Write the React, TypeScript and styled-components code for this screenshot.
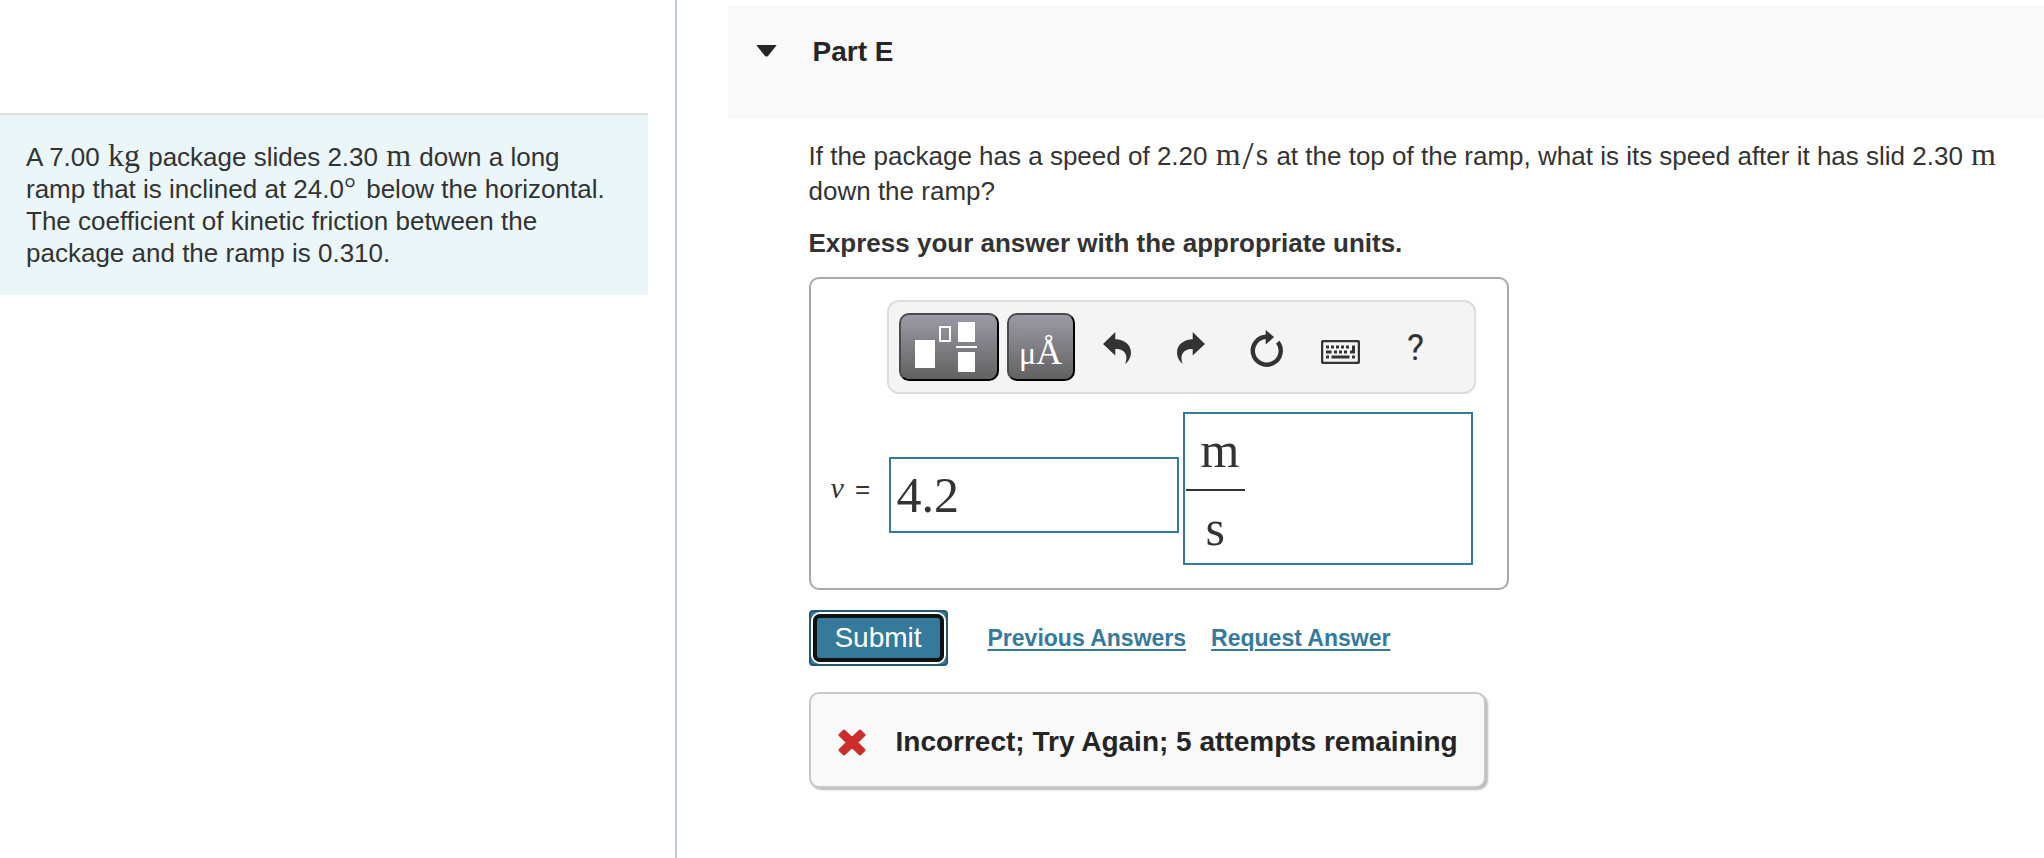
import React, { useState } from 'react';
import styled, { createGlobalStyle } from 'styled-components';

const sans = '"Liberation Sans", Arial, sans-serif';
const serif = '"Liberation Serif", "Times New Roman", serif';
const teal = '#367a9b';

const GlobalStyle = createGlobalStyle`
  *, *::before, *::after { box-sizing: border-box; }
  body { margin: 0; background: #fff; color: #333; font: 26px/32px ${sans}; }
  h2, p { margin: 0; }
  button, input { font: inherit; color: inherit; }
`;

const Page = styled.div`
  display: grid;
  grid-template-columns: 33% 2px 1fr;
  min-height: 100vh;
`;
const Side = styled.aside`
  padding: 113px 27px 0 0;
`;
const Divider = styled.div`
  background: #becbdc;
`;
const Problem = styled.p`
  padding: 26px 32px 26px 26px;
  border-top: 2px solid #ddd;
  background: #eaf6f8;
`;
const Main = styled.main`
  padding-top: 5px;
`;
const PartHeader = styled.header`
  display: flex;
  gap: 36px;
  height: 113px;
  margin-left: 51px;
  padding: 30px 28px;
  background: #f9f9f9;
  color: #252525;
`;
const Toggle = styled.button`
  display: flex;
  align-items: center;
  height: 32px;
  padding: 0;
  border: 0;
  background: none;
`;
const PartTitle = styled.h2`
  font-size: 28px;
  line-height: 34px;
`;
const Body = styled.div`
  display: flex;
  flex-direction: column;
  align-items: flex-start;
  padding: 21px 40px 40px 132px;
`;
const Question = styled.p`
  line-height: 35px;
`;
const Instruction = styled.p`
  margin-top: 18px;
  font-weight: bold;
`;
const Unit = styled.span`
  margin: 0 1px;
  font-family: ${serif};
  font-size: 32px;
  line-height: 1px;
`;
const Slash = styled.span`
  margin: 0 2px;
  font-size: 40px;
  vertical-align: -4px;
`;
const Degree = styled.span`
  margin-right: 3px;
  font-family: ${serif};
  font-size: 30px;
  line-height: 1px;
`;
const AnswerCard = styled.form`
  width: 700px;
  max-width: 100%;
  margin-top: 18px;
  padding: 21px 31px 23px 20px;
  border: 2px solid #a9a9a9;
  border-radius: 10px;
`;
const Toolbar = styled.div`
  display: flex;
  align-items: center;
  gap: 8px;
  height: 94px;
  margin: 0 0 18px 56px;
  padding: 0 10px;
  border: 2px solid #ddd;
  border-radius: 12px;
  background: #f4f4f4;
`;
const PaletteButton = styled.button<{ $width: number }>`
  display: flex;
  align-items: center;
  justify-content: center;
  width: ${p => p.$width}px;
  height: 68px;
  padding: 0;
  border: 2px solid;
  border-color: #4b4b4b #000 #000 #4b4b4b;
  border-radius: 10px;
  background: linear-gradient(#9c9aa5, #626262);
  color: #fff;
`;
const UnitSymbols = styled.span`
  padding-top: 10px;
  font-family: ${serif};
  font-size: 36px;
`;
const Mu = styled.span`
  font-size: 32px;
`;
const ToolGroup = styled.div`
  display: flex;
  flex: 1;
  justify-content: space-between;
  padding: 2px 26px 0 12px;
`;
const ToolButton = styled.button`
  display: flex;
  align-items: center;
  justify-content: center;
  width: 44px;
  height: 44px;
  padding: 0;
  border: 0;
  background: none;
  font-family: Roboto, ${sans};
  font-size: 36px;
`;
const KeyboardButton = styled(ToolButton)`
  padding-top: 8px;
`;
const Fields = styled.div`
  display: flex;
  align-items: center;
  gap: 4px;
`;
const FieldLabel = styled.label`
  width: 54px;
  white-space: nowrap;
`;
const Variable = styled.i`
  margin-right: 4px;
  font-family: ${serif};
  font-size: 30px;
  line-height: 1px;
`;
const ValueInput = styled.input`
  flex: 0 1 290px;
  min-width: 0;
  height: 76px;
  margin-top: 13px;
  padding: 0 6px;
  border: 2px solid ${teal};
  background: #fff;
  font-family: ${serif};
  font-size: 50px;
`;
const UnitBox = styled.div`
  flex: 0 1 290px;
  min-width: 0;
  height: 153px;
  padding: 1px;
  border: 2px solid ${teal};
`;
const FractionPart = styled.input`
  display: block;
  width: 59px;
  height: 74px;
  padding: 0 0 4px 15px;
  border: 0;
  background: none;
  font-family: ${serif};
  font-size: 50px;
  &:last-child { padding: 2px 0 0 20px; border-top: 2px solid #333; }
`;
const Actions = styled.div`
  display: flex;
  align-items: center;
  gap: 25px;
  margin-top: 20px;
`;
const SubmitButton = styled.button`
  display: flex;
  width: 139px;
  height: 56px;
  margin-right: 15px;
  padding: 2px;
  border: 2px solid #25596f;
  border-radius: 4px;
  background: ${teal};
  color: #fff;
  font-size: 28px;
`;
const FocusRing = styled.span`
  flex: 1;
  border: 4px solid #111;
  border-radius: 7px;
  box-shadow: 0 0 0 2px #fff;
  line-height: 40px;
`;
const ActionLink = styled.a`
  color: ${teal};
  font-size: 23px;
  font-weight: bold;
  text-decoration-thickness: 2px;
  text-underline-offset: 3px;
`;
const Feedback = styled.div`
  display: flex;
  align-items: center;
  gap: 30px;
  max-width: 100%;
  min-height: 96px;
  margin-top: 26px;
  padding: 4px 26px 0 27px;
  border: 2px solid #c8c8c8;
  border-radius: 10px;
  background: #f9f9f9;
  box-shadow: 2px 2px 2px #bbb;
  color: #252525;
  font-size: 28px;
  font-weight: bold;
`;

const CaretIcon = () => (
  <svg width="21" height="12" viewBox="0 0 21 12" aria-hidden="true">
    <path d="M1 0H20Q21 0 20 1L12 11Q10.500 12 9 11L1 1Q0 0 1 0Z" fill="#252525" />
  </svg>
);
const TemplatesIcon = () => (
  <svg width="68" height="50" viewBox="0 0 68 50" fill="#fff" aria-hidden="true">
    <path d="M0 18h20v28H0zM43 0h17v20H43zM41 24h21v2H41zM43 30h17v20H43z" />
    <path d="M25 5h10v14h-10z" fill="none" stroke="#fff" strokeWidth="2" />
  </svg>
);
const ArrowIcon = ({ flip = false }: { flip?: boolean }) => (
  <svg width="28" height="32" viewBox="0 0 82 94" fill="#333" aria-hidden="true">
    <path
      transform={flip ? 'translate(82 0) scale(-1 1)' : undefined}
      d="M0 35 36 0V21C62 22 82 36 82 60C82 74 75 86 65 94C73 74 70 50 36 50V69Z"
    />
  </svg>
);
const ResetIcon = () => (
  <svg width="33" height="37" viewBox="0 0 97 110" aria-hidden="true">
    <path d="M82 36A41.500 41.500 0 1 1 49 20" fill="none" stroke="#333" strokeWidth="13" />
    <path d="M46 0 71 21 46 43Z" fill="#333" />
  </svg>
);
const KeyboardIcon = () => (
  <svg width="39" height="24" viewBox="0 0 39 24" fill="#333" aria-hidden="true">
    <rect x="1" y="1" width="37" height="22" rx="2" fill="none" stroke="#333" strokeWidth="2.500" />
    <path d="M5 5.500h3v3H5zM10 5.500h3v3h-3zM15 5.500h3v3h-3zM20 5.500h3v3h-3zM25 5.500h3v3h-3zM31 5.500h3v8h-5v-3h2zM5 10.500h5.500v3H5zM13 10.500h3v3h-3zM18 10.500h3v3h-3zM23 10.500h3v3h-3zM5 15.500h3v3H5zM10.500 15.500h18v3h-18zM31 15.500h3v3h-3z" />
  </svg>
);
const CrossIcon = () => (
  <svg width="28" height="27" viewBox="0 0 28 27" aria-hidden="true">
    <path
      d="M6 2 14 9.500 22 2 26 6 18.500 13.500 26 21 22 25 14 17.500 6 25 2 21 9.500 13.500 2 6Z"
      fill="#cb2c2c"
      stroke="#cb2c2c"
      strokeWidth="3"
      strokeLinejoin="round"
    />
  </svg>
);

export default function App() {
  const [value, setValue] = useState('4.2');
  const [numerator, setNumerator] = useState('m');
  const [denominator, setDenominator] = useState('s');

  return (
    <>
      <GlobalStyle />
      <Page>
        <Side>
          <Problem>
            A 7.00 <Unit>kg</Unit> package slides 2.30 <Unit>m</Unit> down a long ramp that is
            inclined at 24.0<Degree>°</Degree> below the horizontal. The coefficient of kinetic
            friction between the package and the ramp is 0.310.
          </Problem>
        </Side>
        <Divider />
        <Main>
          <PartHeader>
            <Toggle type="button" aria-label="Collapse Part E"><CaretIcon /></Toggle>
            <PartTitle>Part E</PartTitle>
          </PartHeader>
          <Body>
            <Question>
              If the package has a speed of 2.20 <Unit>m<Slash>/</Slash>s</Unit> at the top of the
              ramp, what is its speed after it has slid 2.30 <Unit>m</Unit> down the ramp?
            </Question>
            <Instruction>Express your answer with the appropriate units.</Instruction>
            <AnswerCard id="answer" onSubmit={e => e.preventDefault()}>
              <Toolbar>
                <PaletteButton type="button" $width={100} aria-label="Templates">
                  <TemplatesIcon />
                </PaletteButton>
                <PaletteButton type="button" $width={68} aria-label="Units">
                  <UnitSymbols><Mu>μ</Mu>Å</UnitSymbols>
                </PaletteButton>
                <ToolGroup>
                  <ToolButton type="button" aria-label="Undo"><ArrowIcon /></ToolButton>
                  <ToolButton type="button" aria-label="Redo"><ArrowIcon flip /></ToolButton>
                  <ToolButton type="button" aria-label="Reset"><ResetIcon /></ToolButton>
                  <KeyboardButton type="button" aria-label="Keyboard shortcuts">
                    <KeyboardIcon />
                  </KeyboardButton>
                  <ToolButton type="button" aria-label="Help">?</ToolButton>
                </ToolGroup>
              </Toolbar>
              <Fields>
                <FieldLabel htmlFor="value"><Variable>v</Variable> =</FieldLabel>
                <ValueInput id="value" value={value} onChange={e => setValue(e.target.value)} />
                <UnitBox role="group" aria-label="Units">
                  <FractionPart
                    aria-label="Unit numerator"
                    value={numerator}
                    onChange={e => setNumerator(e.target.value)}
                  />
                  <FractionPart
                    aria-label="Unit denominator"
                    value={denominator}
                    onChange={e => setDenominator(e.target.value)}
                  />
                </UnitBox>
              </Fields>
            </AnswerCard>
            <Actions>
              <SubmitButton type="submit" form="answer"><FocusRing>Submit</FocusRing></SubmitButton>
              <ActionLink href="#previous">Previous Answers</ActionLink>
              <ActionLink href="#request">Request Answer</ActionLink>
            </Actions>
            <Feedback role="status">
              <CrossIcon />
              Incorrect; Try Again; 5 attempts remaining
            </Feedback>
          </Body>
        </Main>
      </Page>
    </>
  );
}
